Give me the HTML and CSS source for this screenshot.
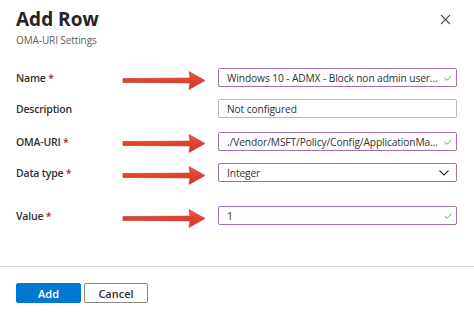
FILE: index.html
```html
<!DOCTYPE html>
<html lang="en">

<head>
    <meta charset="UTF-8">
    <meta name="viewport" content="width=device-width, initial-scale=1.0">
    <title>Add Row</title>

    <link rel="stylesheet" href="styles.css">
</head>

<body>

    <div class="panel">
        <div class="panel-header">
            <div>
                <h1>Add Row</h1>
                <p class="subtitle">OMA-URI Settings</p>
            </div>
            <button class="close" aria-label="Close">
                <svg width="11" height="11" viewBox="0 0 11 11">
                    <path d="M1 1 L10 10 M10 1 L1 10" stroke="#505050" stroke-width="1.1" fill="none" />
                </svg>
            </button>
        </div>

        <div class="form">
            <div class="row">
                <label>Name <span class="req">*</span></label>
                <svg class="arrow" viewBox="0 0 84 19"><use href="#arrow" /></svg>
                <div class="field valid">
                    <span class="value">Windows 10 - ADMX - Block non admin user...</span>
                    <svg class="check" viewBox="0 0 8 6"><path d="M0.5 3 L3 5.3 L7.5 0.6" /></svg>
                </div>
            </div>

            <div class="row">
                <label>Description</label>
                <span></span>
                <div class="field">
                    <span class="value">Not configured</span>
                </div>
            </div>

            <div class="row row-uri">
                <label>OMA-URI <span class="req">*</span></label>
                <svg class="arrow arrow-high" viewBox="0 0 84 19"><use href="#arrow" /></svg>
                <div class="field valid">
                    <span class="value">./Vendor/MSFT/Policy/Config/ApplicationMa...</span>
                    <svg class="check" viewBox="0 0 8 6"><path d="M0.5 3 L3 5.3 L7.5 0.6" /></svg>
                </div>
            </div>

            <div class="row">
                <label>Data type <span class="req">*</span></label>
                <svg class="arrow" viewBox="0 0 84 19"><use href="#arrow" /></svg>
                <div class="field valid">
                    <span class="value">Integer</span>
                    <svg class="chevron" viewBox="0 0 10 6"><path d="M0.5 0.5 L5 5 L9.5 0.5" /></svg>
                </div>
            </div>

            <div class="row row-last">
                <label>Value <span class="req">*</span></label>
                <svg class="arrow" viewBox="0 0 84 19"><use href="#arrow" /></svg>
                <div class="field valid">
                    <span class="value">1</span>
                    <svg class="check" viewBox="0 0 8 6"><path d="M0.5 3 L3 5.3 L7.5 0.6" /></svg>
                </div>
            </div>
        </div>

        <div class="footer">
            <button class="btn btn-primary">Add</button>
            <button class="btn">Cancel</button>
        </div>
    </div>

    <svg width="0" height="0" style="position:absolute">
        <defs>
            <linearGradient id="arrowFill" x1="0" y1="0" x2="0" y2="1">
                <stop offset="0" stop-color="#f0584a" />
                <stop offset="0.5" stop-color="#e2412f" />
                <stop offset="1" stop-color="#c9362a" />
            </linearGradient>
            <g id="arrow">
                <path d="M1 10.5 L68 10.1 L67 3.5 L83 12.5 L67 21.5 L68 14.9 L1 14.5 Z" fill="url(#arrowFill)" stroke="#b8372c" stroke-width="0.6" />
            </g>
        </defs>
    </svg>

</body>

</html>
```

FILE: styles.css
```css
* {
    box-sizing: border-box;
}

html,
body {
    margin: 0;
    padding: 0;
    background-color: white;
}

body {
    font-family: "Open Sans", "Noto Sans", sans-serif;
    color: #323130;
}

.panel {
    width: 474px;
    height: 316px;
    display: flex;
    flex-direction: column;
}

.panel-header {
    display: flex;
    justify-content: space-between;
    align-items: flex-start;
    padding: 6px 23px 0 16px;
}

h1 {
    margin: 0;
    font-size: 19px;
    line-height: 26px;
    font-weight: 700;
    color: #252423;
}

.subtitle {
    margin: 1px 0 0;
    font-size: 10px;
    line-height: 14px;
    letter-spacing: -0.1px;
    color: #605e5c;
}

.close {
    border: 0;
    background: none;
    padding: 0;
    margin-top: 8px;
    width: 11px;
    height: 11px;
    display: flex;
}

.form {
    display: flex;
    flex-direction: column;
    gap: 12px;
    padding: 21px 17px 0 16px;
}

.row {
    display: grid;
    grid-template-columns: 94px 84px 239px;
    grid-template-rows: 19px;
    column-gap: 12px;
    align-items: center;
}

.row-uri {
    margin-top: 2px;
}

.row-last {
    margin-top: 12px;
}

label {
    font-size: 10.5px;
    font-weight: 600;
    letter-spacing: -0.2px;
    color: #323130;
    white-space: nowrap;
}

.req {
    color: #a4262c;
}

.arrow {
    width: 84px;
    height: 19px;
    overflow: visible;
}

.arrow-high {
    transform: translateY(-1px);
}

.field {
    display: flex;
    align-items: center;
    justify-content: space-between;
    height: 19px;
    padding: 0 4px 0 8px;
    border: 1px solid #bcbab8;
    border-radius: 2px;
    overflow: hidden;
}

.field.valid {
    border-color: #9a6fbf;
}

.value {
    font-size: 10.2px;
    letter-spacing: -0.1px;
    white-space: nowrap;
    color: #323130;
}

.check {
    flex: none;
    width: 8px;
    height: 6px;
    fill: none;
    stroke: #6bb24f;
    stroke-width: 1;
}

.chevron {
    flex: none;
    width: 10px;
    height: 6px;
    margin-right: 3px;
    fill: none;
    stroke: #323130;
    stroke-width: 1.1;
}

.footer {
    margin-top: auto;
    height: 50px;
    border-top: 1px solid #dcdcdc;
    display: flex;
    align-items: flex-start;
    gap: 3px;
    padding: 16px 16px 0;
}

.btn {
    height: 20px;
    width: 64px;
    border: 1px solid #8a8886;
    border-radius: 2px;
    background: white;
    font-family: inherit;
    font-size: 11px;
    font-weight: 600;
    color: #323130;
    padding: 0;
}

.btn-primary {
    width: 65px;
    border-color: #0078d4;
    background-color: #0078d4;
    color: white;
}
```
